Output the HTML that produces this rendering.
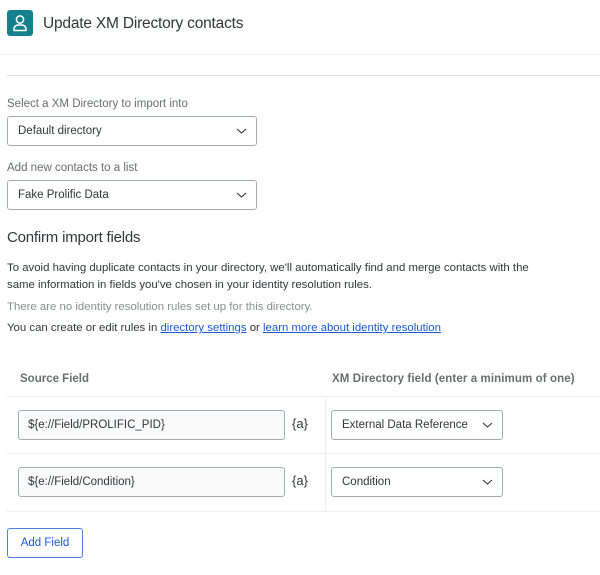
<!DOCTYPE html>
<html><head><style>
body{margin:0;width:600px;height:575px;background:#fff;font-family:"Liberation Sans",sans-serif;color:#32363a;position:relative;overflow:hidden}
.a{position:absolute;white-space:nowrap}
.sel{position:absolute;border:1px solid #a5abb1;border-radius:3px;background:#fff;box-sizing:border-box;font-size:11.5px}
.sel span{position:absolute;left:10px;top:50%;transform:translateY(-50%)}
.chev{position:absolute;right:9px;top:50%;margin-top:-3px}
.inp{position:absolute;border:1px solid #a5abb1;border-radius:3px;background:#fafafa;box-sizing:border-box;font-size:11.5px}
.inp span{position:absolute;left:9px;top:50%;transform:translateY(-50%)}
.hl{position:absolute;left:6px;right:0;height:1px;background:#eee}
a{color:#1a5ad6;text-decoration:underline}
.p{font-size:11.4px}
</style></head><body>
<div class="a" style="left:7px;top:10px;width:26px;height:26px;background:#14818c;border-radius:3px">
<svg width="26" height="26" viewBox="0 0 26 26"><circle cx="13" cy="9.5" r="3.6" fill="none" stroke="#fff" stroke-width="1.5"/><path d="M7 20.5v-1.5a4 4 0 0 1 4-4h4a4 4 0 0 1 4 4v1.5z" fill="none" stroke="#fff" stroke-width="1.5" stroke-linejoin="round"/></svg></div>
<div class="a" style="left:43px;top:15px;font-size:15.5px;letter-spacing:-0.2px;color:#32363a">Update XM Directory contacts</div>
<div class="a" style="left:0;right:0;top:54px;height:1px;background:#eee"></div>
<div class="a" style="left:7px;right:0;top:75px;height:1px;background:#ddd"></div>
<div class="a" style="left:7px;top:98px;font-size:11.5px;color:#6a6d70">Select a XM Directory to import into</div>
<div class="sel" style="left:7px;top:116px;width:250px;height:30px"><span>Default directory</span><svg class="chev" width="11" height="7"><path d="M1 1l4.5 4 4.5-4" fill="none" stroke="#32363a" stroke-width="1.1"/></svg></div>
<div class="a" style="left:7px;top:162px;font-size:11.5px;color:#6a6d70">Add new contacts to a list</div>
<div class="sel" style="left:7px;top:180px;width:250px;height:30px"><span>Fake Prolific Data</span><svg class="chev" width="11" height="7"><path d="M1 1l4.5 4 4.5-4" fill="none" stroke="#32363a" stroke-width="1.1"/></svg></div>
<div class="a" style="left:7px;top:229px;font-size:15px;letter-spacing:-0.2px">Confirm import fields</div>
<div class="a p" style="left:7px;top:262px">To avoid having duplicate contacts in your directory, we'll automatically find and merge contacts with the</div>
<div class="a p" style="left:7px;top:279px">same information in fields you've chosen in your identity resolution rules.</div>
<div class="a p" style="left:7px;top:301px;color:#8a8d90">There are no identity resolution rules set up for this directory.</div>
<div class="a p" style="left:7px;top:322px">You can create or edit rules in <a>directory settings</a> or <a>learn more about identity resolution</a></div>
<div class="a" style="left:20px;top:373px;font-size:11.5px;font-weight:bold;color:#6a6d70">Source Field</div>
<div class="a" style="left:332px;top:373px;font-size:11.5px;font-weight:bold;color:#6a6d70;letter-spacing:0.1px">XM Directory field (enter a minimum of one)</div>
<div class="hl" style="top:396px"></div>
<div class="hl" style="top:453px"></div>
<div class="hl" style="top:511px"></div>
<div class="a" style="left:325px;top:396px;width:1px;height:115px;background:#eee"></div>
<div class="inp" style="left:18px;top:410px;width:267px;height:30px"><span>${e://Field/PROLIFIC_PID}</span></div>
<div class="a" style="left:292px;top:416px;font-size:13px">{a}</div>
<div class="sel" style="left:331px;top:410px;width:172px;height:30px"><span>External Data Reference</span><svg class="chev" width="11" height="7"><path d="M1 1l4.5 4 4.5-4" fill="none" stroke="#32363a" stroke-width="1.1"/></svg></div>
<div class="inp" style="left:18px;top:467px;width:267px;height:30px"><span>${e://Field/Condition}</span></div>
<div class="a" style="left:292px;top:473px;font-size:13px">{a}</div>
<div class="sel" style="left:331px;top:467px;width:172px;height:30px"><span>Condition</span><svg class="chev" width="11" height="7"><path d="M1 1l4.5 4 4.5-4" fill="none" stroke="#32363a" stroke-width="1.1"/></svg></div>
<div class="a" style="left:7px;top:528px;width:76px;height:30px;border:1px solid #4a80e0;border-radius:3px;box-sizing:border-box;color:#1a5ad6;font-size:11.5px;text-align:center;line-height:28px">Add Field</div>
</body></html>
